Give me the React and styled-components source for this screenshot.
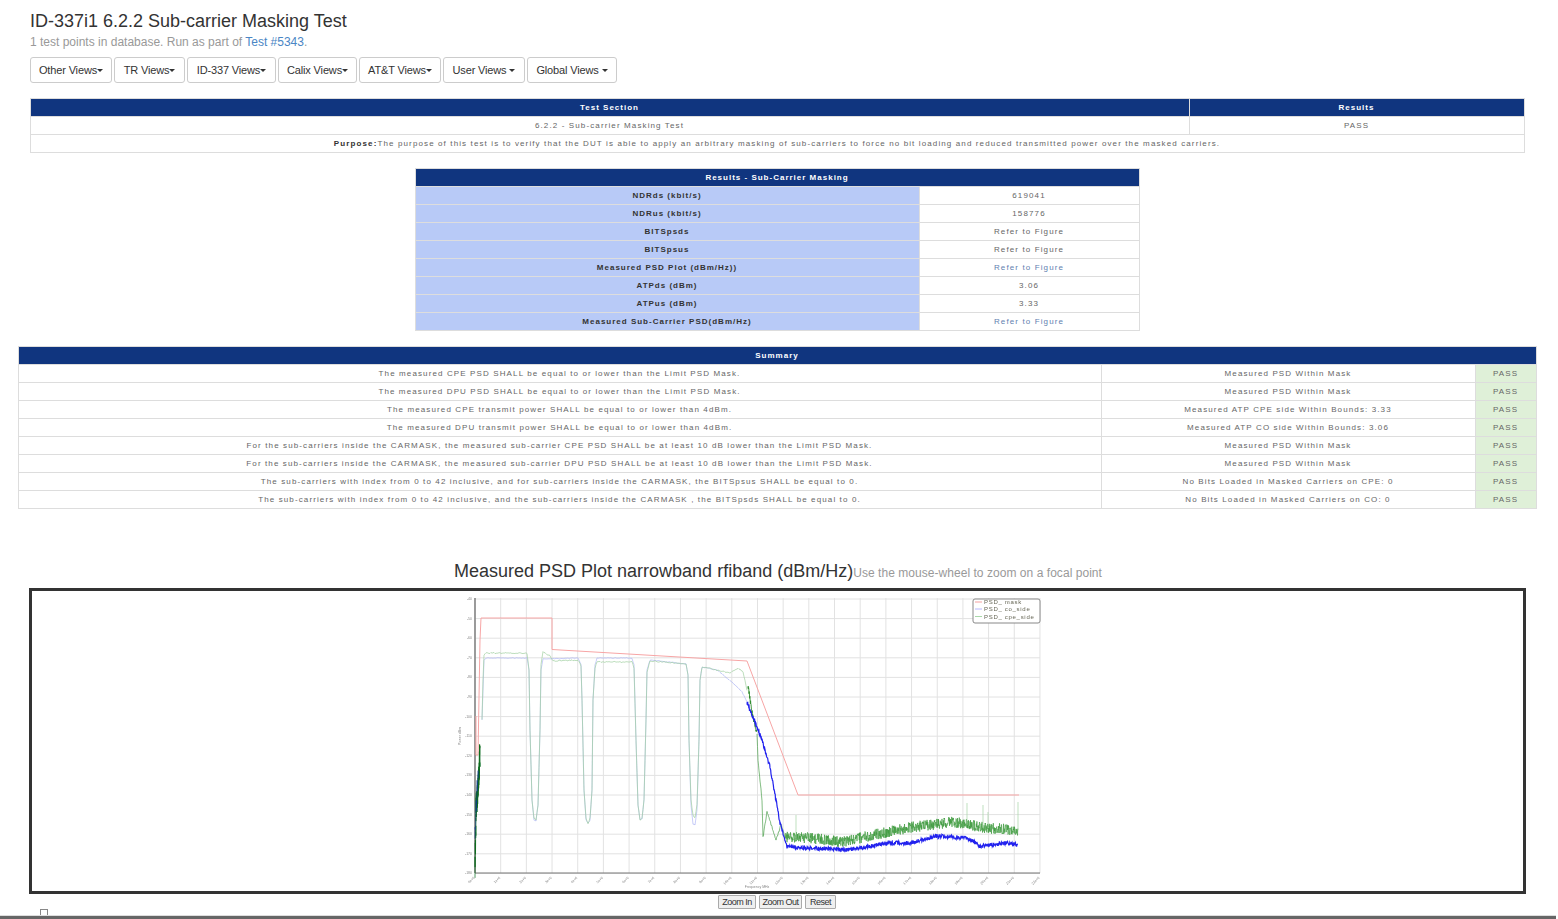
import React, { useMemo } from "react";
import styled, { createGlobalStyle } from "styled-components";

const GlobalStyle = createGlobalStyle`
  html, body {
    margin: 0;
    padding: 0;
    height: 100%;
    overflow: hidden;
    background: #fff;
    font-family: "Liberation Sans", Arial, sans-serif;
    color: #333;
  }
`;

const Page = styled.div`
  width: 1556px;
  height: 919px;
  display: flex;
  flex-direction: column;
  overflow: hidden;
`;

const Header = styled.div`
  padding: 11px 30px 0;
`;

const Title = styled.h1`
  margin: 0;
  font-size: 18px;
  line-height: 20px;
  font-weight: 400;
  color: #333;
`;

const SubTitle = styled.p`
  margin: 4px 0 0;
  font-size: 12px;
  line-height: 15px;
  color: #999;
`;

const TestLink = styled.a`
  color: #4a86c5;
  text-decoration: none;
`;

const Toolbar = styled.div`
  display: flex;
  gap: 2px;
  margin-top: 7px;
`;

const ViewButton = styled.button`
  height: 26px;
  width: ${(p) => p.$w}px;
  padding: 0;
  background: #fff;
  border: 1px solid #ccc;
  border-radius: 3px;
  font-family: inherit;
  font-size: 11px;
  letter-spacing: -0.15px;
  color: #333;
  display: flex;
  align-items: center;
  justify-content: center;
  gap: ${(p) => (p.$spaced ? 3 : 0)}px;
`;

const Caret = styled.span`
  width: 0;
  height: 0;
  border-left: 3px solid transparent;
  border-right: 3px solid transparent;
  border-top: 3px solid #333;
  margin-top: 1px;
`;

const TableColumn = styled.div`
  width: 1554px;
`;

const DataTable = styled.table`
  border-collapse: collapse;
  table-layout: fixed;
  width: ${(p) => p.$w}px;
  margin: ${(p) => p.$top}px auto 0;
  font-size: 8px;
  letter-spacing: 1.12px;
  line-height: 17px;
`;

const HeadCell = styled.th`
  height: 17px;
  padding: 0;
  background: #10357f;
  color: #fff;
  font-weight: 700;
  letter-spacing: 1px;
  text-align: center;
  border: 1px solid #ddd;
`;

const Cell = styled.td`
  height: 17px;
  padding: 0;
  text-align: center;
  color: ${(p) => (p.$link ? "#5f7fb0" : "#666")};
  border: 1px solid #ddd;
  white-space: nowrap;
`;

const LabelCell = styled(Cell)`
  background: #b8caf7;
  color: #333;
  font-weight: 700;
  letter-spacing: 1px;
`;

const PassCell = styled(Cell)`
  background: #dff0d8;
  color: #666;
`;

const PurposeLabel = styled.b`
  color: #333;
`;

const PlotHeading = styled.div`
  margin-top: 52px;
  text-align: center;
  line-height: 20px;
  font-size: 18px;
  color: #333;
`;

const PlotHint = styled.small`
  font-size: 12px;
  letter-spacing: 0.045px;
  color: #999;
`;

const PlotFrame = styled.div`
  margin: 5px 0 0 29px;
  width: 1491px;
  height: 300px;
  border: 3px solid #333;
  display: flex;
  justify-content: center;
`;

const ZoomBar = styled.div`
  width: 1554px;
  display: flex;
  justify-content: center;
  gap: 3px;
  margin-top: 1px;
`;

const ZoomButton = styled.button`
  width: ${(p) => p.$w}px;
  height: 14px;
  padding: 0;
  background: #efefef;
  border: 1px solid #aaa;
  border-radius: 1px;
  font-family: inherit;
  font-size: 9px;
  letter-spacing: -0.5px;
  color: #333;
`;

const BoxRow = styled.div`
  height: 6px;
  padding-left: 40px;
`;

const SmallBox = styled.span`
  display: block;
  width: 8px;
  height: 6px;
  border: 1px solid #888;
  border-bottom: none;
  box-sizing: border-box;
`;

const BottomBar = styled.div`
  flex: 1;
  background: #666;
  border-top: 1px solid #ddd;
`;

const ChartSvg = styled.svg`
  display: block;
  width: 655px;
  height: 300px;
`;

const TickText = styled.text`
  font-family: "Liberation Sans", Arial, sans-serif;
  font-size: 3.5px;
  fill: #888;
`;

const LegendText = styled.text`
  font-family: "Liberation Sans", Arial, sans-serif;
  font-size: 6px;
  letter-spacing: 0.7px;
  fill: #665;
`;

const views = [
  ["Other Views", 82],
  ["TR Views", 71],
  ["ID-337 Views", 89],
  ["Calix Views", 79],
  ["AT&T Views", 82],
  ["User Views", 82, true],
  ["Global Views", 90, true],
];

const subCarrierRows = [
  ["NDRds (kbit/s)", "619041"],
  ["NDRus (kbit/s)", "158776"],
  ["BITSpsds", "Refer to Figure"],
  ["BITSpsus", "Refer to Figure"],
  ["Measured PSD Plot (dBm/Hz))", "Refer to Figure", true],
  ["ATPds (dBm)", "3.06"],
  ["ATPus (dBm)", "3.33"],
  ["Measured Sub-Carrier PSD(dBm/Hz)", "Refer to Figure", true],
];

const summaryRows = [
  ["The measured CPE PSD SHALL be equal to or lower than the Limit PSD Mask.", "Measured PSD Within Mask"],
  ["The measured DPU PSD SHALL be equal to or lower than the Limit PSD Mask.", "Measured PSD Within Mask"],
  ["The measured CPE transmit power SHALL be equal to or lower than 4dBm.", "Measured ATP CPE side Within Bounds: 3.33"],
  ["The measured DPU transmit power SHALL be equal to or lower than 4dBm.", "Measured ATP CO side Within Bounds: 3.06"],
  ["For the sub-carriers inside the CARMASK, the measured sub-carrier CPE PSD SHALL be at least 10 dB lower than the Limit PSD Mask.", "Measured PSD Within Mask"],
  ["For the sub-carriers inside the CARMASK, the measured sub-carrier DPU PSD SHALL be at least 10 dB lower than the Limit PSD Mask.", "Measured PSD Within Mask"],
  ["The sub-carriers with index from 0 to 42 inclusive, and for sub-carriers inside the CARMASK, the BITSpsus SHALL be equal to 0.", "No Bits Loaded in Masked Carriers on CPE: 0"],
  ["The sub-carriers with index from 0 to 42 inclusive, and the sub-carriers inside the CARMASK , the BITSpsds SHALL be equal to 0.", "No Bits Loaded in Masked Carriers on CO: 0"],
];

const maskPts = [[476, 716], [476, 755], [478, 755], [480, 640], [481, 618], [552, 618], [552, 649.5], [747, 661], [798, 795], [1019, 795]];

const blueTop = [
  [482, 720], [483, 690], [484, 660], [486, 658], [527, 658], [529, 670], [530, 730], [532, 800], [534, 820], [536, 821],
  [538, 805], [540, 730], [541, 670], [543, 659], [578, 658], [581, 664], [582, 700], [584, 790], [586, 820], [588, 823],
  [590, 820], [592, 790], [593, 700], [595, 665], [597, 658], [632, 658], [634, 665], [636, 740], [638, 805], [640, 820],
  [642, 819], [644, 800], [646, 720], [647, 670], [650, 660], [686, 664], [688, 675], [689, 740], [691, 805], [693, 824],
  [695, 825], [697, 810], [699, 740], [700, 680], [702, 667], [717, 670], [733, 683], [742, 692], [747, 702], [747, 776],
];

const greenTop = [
  [482, 720], [483, 680], [484, 655], [486, 653], [527, 653], [529, 670], [530, 730], [532, 800], [534, 818], [536, 820],
  [538, 805], [540, 730], [541, 665], [543, 652], [550, 656], [553, 661], [578, 660], [581, 666], [582, 700], [584, 790],
  [586, 818], [588, 824], [590, 818], [592, 790], [593, 700], [595, 668], [597, 662], [632, 662], [634, 668], [636, 740],
  [638, 805], [640, 820], [642, 818], [644, 800], [646, 720], [647, 672], [650, 661], [686, 664], [688, 675], [689, 740],
  [691, 800], [693, 815], [695, 818], [697, 805], [699, 740], [700, 680], [702, 667], [717, 670], [730, 673], [738, 668],
  [743, 672], [747, 690], [747, 760],
];

const blueBand = [[747, 702], [762, 740], [770, 767], [780, 823], [787, 847], [810, 848], [847, 850], [887, 843], [910, 843], [937, 836], [967, 838], [980, 846], [1007, 843], [1018, 845]];
const greenThick = [[748, 686], [752, 712], [757, 733]];
const greenDrop = [[757, 733], [758, 760], [762, 800], [763, 837], [767, 812], [776, 840], [781, 825], [785, 837]];
const greenBand = [[785, 837], [810, 838], [843, 842], [873, 835], [913, 827], [953, 822], [987, 828], [1018, 830]];
const greenSpikes = [[796, 815, 838], [967, 803, 825], [983, 805, 828], [988, 812, 828], [1018, 802, 830]];

const seeded = (seed) => () => {
  seed = (seed + 0x6d2b79f5) | 0;
  let t = Math.imul(seed ^ (seed >>> 15), 1 | seed);
  t = (t + Math.imul(t ^ (t >>> 7), 61 | t)) ^ t;
  return ((t ^ (t >>> 14)) >>> 0) / 4294967296 - 0.5;
};

const toPath = (pts) => pts.map((p, i) => `${i ? "L" : "M"}${p[0].toFixed(1)} ${p[1].toFixed(1)}`).join("");

// walks along the key points and jitters y, the way the measured traces do
const noisyPath = (pts, step, amp, seed) => {
  const rand = seeded(seed);
  const out = [];
  pts.slice(1).forEach((b, i) => {
    const a = pts[i];
    const n = Math.max(1, Math.round(Math.abs(b[0] - a[0]) / step));
    for (let k = 0; k < n; k++) {
      const f = k / n;
      out.push([a[0] + (b[0] - a[0]) * f, a[1] + (b[1] - a[1]) * f + rand() * amp]);
    }
  });
  return toPath(out);
};

const hLines = Array.from({ length: 16 }, (_, i) => 599 + i * 19.6);
const vLines = Array.from({ length: 23 }, (_, i) => 475 + i * 25.68);

const legend = [
  ["PSD_ mask", "#f5a0a0", 603.5],
  ["PSD_ co_side", "#b8b8ff", 610.5],
  ["PSD_ cpe_side", "#a8d8a8", 618],
];

function PsdChart() {
  const traces = useMemo(
    () => ({
      blueTop: noisyPath(blueTop, 1, 0.8, 11),
      greenTop: noisyPath(greenTop, 1, 1.2, 23),
      blueBand: noisyPath(blueBand, 0.35, 4, 37),
      greenThick: noisyPath(greenThick, 0.2, 5, 43),
      greenDrop: noisyPath(greenDrop, 0.5, 2.5, 41),
      greenBand: noisyPath(greenBand, 0.25, 11, 59),
      greenStart: noisyPath([[475, 870], [476, 810], [478, 790], [480, 750]], 0.05, 30, 71),
      blueStart: noisyPath([[475, 835], [477, 790], [478.5, 770]], 0.15, 18, 83),
    }),
    []
  );

  return (
    <ChartSvg viewBox="450 591 655 300" aria-label="Measured PSD plot">
      <defs>
        <filter id="soft" x="-5%" y="-5%" width="110%" height="110%">
          <feGaussianBlur stdDeviation="0.35" />
        </filter>
      </defs>
      <g filter="url(#soft)">
        {hLines.map((y) => (
          <line key={y} x1={475} x2={1040} y1={y} y2={y} stroke="#e2e2e2" />
        ))}
        {vLines.map((x) => (
          <line key={x} x1={x} x2={x} y1={598} y2={873} stroke="#e2e2e2" />
        ))}
        <line x1={475} x2={475} y1={598} y2={873} stroke="#777" strokeWidth="1.4" />
        <line x1={475} x2={1040} y1={873} y2={873} stroke="#777" strokeWidth="1.2" />

        <path d={toPath(maskPts)} fill="none" stroke="#f7a5a5" strokeWidth="1" />
        <path d={traces.blueTop} fill="none" stroke="#b0b8f5" strokeWidth="0.7" />
        <path d={traces.greenTop} fill="none" stroke="#a0d0a0" strokeWidth="0.7" />
        <path d={traces.greenBand} fill="none" stroke="#3f9a3f" strokeWidth="0.8" opacity="0.85" />
        {greenSpikes.map(([x, y1, y2]) => (
          <line key={x} x1={x} x2={x} y1={y1} y2={y2} stroke="#a5d2a5" strokeWidth="0.7" />
        ))}
        <path d={traces.greenThick} fill="none" stroke="#2e8b2e" strokeWidth="0.9" />
        <path d={traces.greenDrop} fill="none" stroke="#4a9f4a" strokeWidth="0.7" />
        <path d={traces.blueBand} fill="none" stroke="#2222ee" strokeWidth="1.2" />
        <path d={traces.greenStart} fill="none" stroke="#0b6b1c" strokeWidth="0.7" />
        <path d={traces.blueStart} fill="none" stroke="#123c8c" strokeWidth="0.6" />

        {hLines.map((y, i) => (
          <TickText key={y} x={472} y={y + 1} textAnchor="end">
            {-40 - i * 10}
          </TickText>
        ))}
        {vLines.map((x, i) => (
          <TickText key={x} x={x} y={878} textAnchor="end" transform={`rotate(-45 ${x} 878)`}>
            {`${i}e+6`}
          </TickText>
        ))}
        <TickText x={461} y={736} textAnchor="middle" transform="rotate(-90 461 736)">
          Power dBm
        </TickText>
        <TickText x={757} y={888} textAnchor="middle">
          Frequency MHz
        </TickText>

        <rect x={973} y={599} width={67} height={24} rx={2} fill="#fff" stroke="#888" />
        {legend.map(([label, color, y]) => (
          <g key={label}>
            <line x1={975} x2={982} y1={y - 1.5} y2={y - 1.5} stroke={color} />
            <LegendText x={984} y={y + 0.5}>
              {label}
            </LegendText>
          </g>
        ))}
      </g>
    </ChartSvg>
  );
}

export default function App() {
  return (
    <Page>
      <GlobalStyle />
      <Header>
        <Title>ID-337i1 6.2.2 Sub-carrier Masking Test</Title>
        <SubTitle>
          1 test points in database. Run as part of <TestLink href="#">Test #5343</TestLink>.
        </SubTitle>
        <Toolbar>
          {views.map(([label, width, spaced]) => (
            <ViewButton key={label} $w={width} $spaced={spaced}>
              {label}
              <Caret />
            </ViewButton>
          ))}
        </Toolbar>
      </Header>

      <TableColumn>
        <DataTable $w={1495} $top={15}>
          <colgroup>
            <col style={{ width: 1159 }} />
            <col />
          </colgroup>
          <thead>
            <tr>
              <HeadCell>Test Section</HeadCell>
              <HeadCell>Results</HeadCell>
            </tr>
          </thead>
          <tbody>
            <tr>
              <Cell>6.2.2 - Sub-carrier Masking Test</Cell>
              <Cell>PASS</Cell>
            </tr>
            <tr>
              <Cell colSpan={2}>
                <PurposeLabel>Purpose:</PurposeLabel>The purpose of this test is to verify that the DUT is able to apply an arbitrary masking of sub-carriers to force no bit loading and reduced transmitted power over the masked carriers.
              </Cell>
            </tr>
          </tbody>
        </DataTable>

        <DataTable $w={725} $top={15}>
          <colgroup>
            <col style={{ width: 504 }} />
            <col />
          </colgroup>
          <thead>
            <tr>
              <HeadCell colSpan={2}>Results - Sub-Carrier Masking</HeadCell>
            </tr>
          </thead>
          <tbody>
            {subCarrierRows.map(([label, value, link]) => (
              <tr key={label}>
                <LabelCell>{label}</LabelCell>
                <Cell $link={link}>{value}</Cell>
              </tr>
            ))}
          </tbody>
        </DataTable>

        <DataTable $w={1519} $top={15}>
          <colgroup>
            <col style={{ width: 1083 }} />
            <col style={{ width: 374 }} />
            <col />
          </colgroup>
          <thead>
            <tr>
              <HeadCell colSpan={3}>Summary</HeadCell>
            </tr>
          </thead>
          <tbody>
            {summaryRows.map(([requirement, result]) => (
              <tr key={requirement}>
                <Cell>{requirement}</Cell>
                <Cell>{result}</Cell>
                <PassCell>PASS</PassCell>
              </tr>
            ))}
          </tbody>
        </DataTable>
      </TableColumn>

      <PlotHeading>
        Measured PSD Plot narrowband rfiband (dBm/Hz)<PlotHint>Use the mouse-wheel to zoom on a focal point</PlotHint>
      </PlotHeading>
      <PlotFrame>
        <PsdChart />
      </PlotFrame>
      <ZoomBar>
        <ZoomButton $w={38}>Zoom In</ZoomButton>
        <ZoomButton $w={43}>Zoom Out</ZoomButton>
        <ZoomButton $w={31}>Reset</ZoomButton>
      </ZoomBar>
      <BoxRow>
        <SmallBox />
      </BoxRow>
      <BottomBar />
    </Page>
  );
}
